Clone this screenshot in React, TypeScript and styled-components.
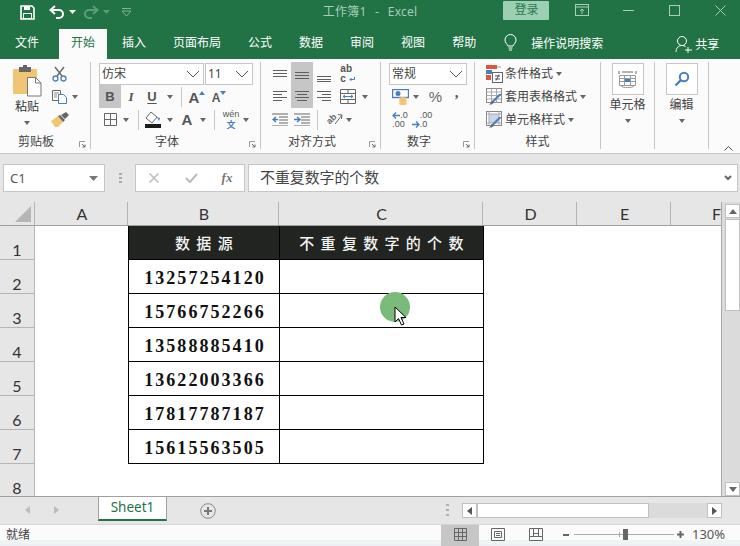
import React from "react";
import styled, { createGlobalStyle } from "styled-components";

const Global = createGlobalStyle`
  html, body { margin: 0; padding: 0; background: #fff; }
  * { box-sizing: border-box; }
  #root { width: 740px; height: 546px; overflow: hidden; }
`;
const CJK = `"Noto Sans", "Noto Sans CJK SC", sans-serif`;

const Page = styled.div`
  width: 740px; height: 546px; display: flex; flex-direction: column; overflow: hidden;
  font-family: ${CJK}; font-size: 12px; color: #444; background: #e6e6e6;
`;
/* ---------- title bar ---------- */
const TitleBar = styled.div`
  height: 29px; background: #217346; display: grid; grid-template-columns: 1fr auto 1fr; align-items: center; overflow: hidden;
`;
const Qat = styled.div`display: flex; align-items: center; height: 100%; padding-left: 20px; padding-bottom: 5px;`;
const QatCell = styled.span<{ $w: number }>`width: ${p => p.$w}px; display: inline-flex; align-items: center; justify-content: flex-start;`;
const Title = styled.div`color: #a9cdb9; font-size: 12px; line-height: 14px; padding-bottom: 6px; white-space: pre; word-spacing: 1px; letter-spacing: 0.2px;`;
const WinControls = styled.div`display: flex; justify-content: flex-end; align-items: center; height: 100%; margin-right: -4px;`;
const Login = styled.div`
  width: 46px; height: 19px; margin: 0 9px 9px 0; border-radius: 1px; background: #9ccfb3; color: #2b7a4f;
  display: flex; align-items: center; justify-content: center; font-size: 12px; line-height: 14px;
`;
const WinBtn = styled.div`width: 46.4px; height: 19px; margin-bottom: 9px; display: flex; align-items: center; justify-content: center;`;
/* ---------- tabs ---------- */
const TabBar = styled.div`height: 30px; background: #217346; display: flex; align-items: stretch; padding-left: 3px; color: #fff;`;
const Tab = styled.div<{ $on?: boolean; $mr?: number }>`
  padding: 0 12px; margin-right: ${p => p.$mr ?? 3}px; display: flex; align-items: center; font-size: 12px; line-height: 14px; padding-bottom: 2px;
  background: ${p => (p.$on ? "#fbfbfb" : "transparent")}; color: ${p => (p.$on ? "#217346" : "#fff")};
`;
const TellMe = styled.div`display: flex; align-items: center; padding: 0 0 2px 14px; gap: 14px; font-size: 12px;`;
const Share = styled.div`display: flex; align-items: center; margin-left: 72px; padding-bottom: 1px; gap: 2px; font-size: 12px;`;
/* ---------- ribbon ---------- */
const Ribbon = styled.div`height: 95px; background: #fbfbfb; border-bottom: 1px solid #c9c9c9; display: flex; padding-top: 3px; color: #444;`;
const Group = styled.div<{ $w: number }>`
  width: ${p => p.$w}px; height: 87px; border-right: 1px solid #c6c6c6; position: relative; flex: none; display: flex; flex-direction: column;
`;
const GroupBody = styled.div`height: 73px; display: flex;`;
const GroupLabel = styled.div<{ $pr?: number }>`height: 14px; line-height: 14px; text-align: center; font-size: 12px; color: #444; padding-right: ${p => p.$pr ?? 0}px;`;
const Launcher = styled.span`position: absolute; right: 4px; bottom: 1px; display: flex;`;
const Rows = styled.div<{ $pl?: number }>`display: flex; flex-direction: column; padding-left: ${p => p.$pl ?? 0}px;`;
const Row = styled.div<{ $h?: number }>`display: flex; align-items: center; height: ${p => p.$h ?? 23}px;`;
const Cell = styled.span<{ $w: number; $on?: boolean }>`
  width: ${p => p.$w}px; height: 100%; display: inline-flex; align-items: center; justify-content: center; flex: none;
  background: ${p => (p.$on ? "#c6c6c6" : "transparent")};
`;
const Caret = styled.span`width: 0; height: 0; flex: none; border-left: 3.5px solid transparent; border-right: 3.5px solid transparent; border-top: 4px solid #666;`;
const VSep = styled.span<{ $l: number; $r: number }>`width: 1px; height: 20px; background: #c6c6c6; flex: none; margin: 0 ${p => p.$r}px 0 ${p => p.$l}px;`;
const Combo = styled.div<{ $w: number; $ml?: number }>`
  width: ${p => p.$w}px; height: 22px; margin-left: ${p => p.$ml ?? 0}px; background: #fff; border: 1px solid #c6c6c6; display: flex; align-items: center; justify-content: space-between;
  padding: 0 3px 0 2px; font-size: 12px; color: #444; line-height: 14px;
`;
const PasteCol = styled.div`width: 47px; padding-left: 7px; display: flex; flex-direction: column; align-items: center;`;
const PasteLabel = styled.div`font-size: 12px; line-height: 14px; margin-top: 3px; color: #333;`;
const GlyphB = styled.span`font: 700 13px "Liberation Sans", sans-serif; color: #555;`;
const GlyphI = styled.span`font: italic 700 13px "Liberation Serif", serif; color: #555;`;
const GlyphU = styled.span`font: 700 13px "Liberation Sans", sans-serif; color: #555; text-decoration: underline; text-underline-offset: 2px;`;
const GlyphA = styled.span<{ $s?: number }>`font: 700 ${p => p.$s ?? 14}px "Liberation Sans", sans-serif; color: #555; line-height: 14px;`;
const StackA = styled.span`display: inline-flex; align-items: flex-start; gap: 0; margin-top: 2px;`;
const Wen = styled.span`display: flex; flex-direction: column; align-items: center; gap: 1px; font-size: 9px; line-height: 9px; color: #555; font-family: "Liberation Sans", sans-serif;`;
const WenZh = styled.span`color: #4a7ebb; font: 700 9px/9px "Noto Sans CJK SC", sans-serif;`;
const AbC = styled.span`display: flex; flex-direction: column; font: 700 10px/10px "Liberation Sans", sans-serif; color: #555;`;
const Pct = styled.span`font: 15px "Liberation Sans", sans-serif; color: #666;`;
const Comma = styled.span`font: 700 15px/12px "Liberation Serif", serif; color: #555; margin-top: -9px;`;
const Dec = styled.span`display: grid; grid-template-columns: 8px auto; font: 9px/9px "Liberation Sans", sans-serif; color: #555; align-items: center;`;
const StyleText = styled.span`margin: 0 3px 0 2px; font-size: 12px; line-height: 14px; color: #444;`;
const BigCol = styled.div`width: 100%; display: flex; flex-direction: column; align-items: center; padding-top: 1px;`;
const BigBtn = styled.div`width: 32px; height: 32px; border: 1px solid #c6c6c6; background: #fff; display: flex; align-items: center; justify-content: center;`;
const BigLabel = styled.div`font-size: 12px; line-height: 14px; margin: 3px 0 7px;`;
const Collapse = styled.span`margin: auto 7px 2px 15px; display: flex;`;
/* ---------- formula bar ---------- */
const FormulaBar = styled.div`height: 48px; background: #e6e6e6; display: flex; padding: 10px 2px 10px 3px; align-items: stretch;`;
const Box = styled.div<{ $w?: number; $grow?: boolean; $ml?: number }>`
  ${p => (p.$w ? `width:${p.$w}px;` : "")} ${p => (p.$grow ? "flex:1;" : "")}
  margin-left: ${p => p.$ml ?? 0}px;
  background: #fff; border: 1px solid #c6c6c6; display: flex; align-items: center; line-height: 16px;
`;
const NameText = styled.span`flex: 1; padding-left: 6px; font: 13px "Noto Sans", sans-serif; color: #555;`;
const Dots = styled.div`width: 30px; display: flex; align-items: center; justify-content: center;`;
const FnCell = styled.span<{ $w: number }>`width: ${p => p.$w}px; display: flex; align-items: center; justify-content: center;`;
const Fx = styled.span`font: italic 700 13px "Liberation Serif", serif; color: #777;`;
const FormulaText = styled.span`flex: 1; padding: 0 0 3px 11px; font-size: 14.9px; color: #444;`;
/* ---------- sheet ---------- */
const SheetArea = styled.div`height: 294px; display: flex; position: relative; overflow: hidden;`;
const SheetMain = styled.div`width: 722px; display: flex; flex-direction: column; border-right: 1px solid #a9a9a9;`;
const HeaderRow = styled.div`height: 24px; display: grid; grid-template-columns: 35px 93px 151px 204px 94px 94px 50px; background: #e6e6e6; border-bottom: 1px solid #a0a0a0; overflow: hidden;`;
const Corner = styled.div`display: flex; padding: 4px 0 0 15px; border-right: 1px solid #b5b5b5;`;
const ColHead = styled.div<{ $cut?: boolean }>`
  text-align: center; font: 16px/24px Lato, sans-serif; color: #333; padding-left: 2px;
  border-right: ${p => (p.$cut ? "0" : "1px solid #b5b5b5")};
  ${p => (p.$cut ? "padding-left: 41px; white-space: nowrap; text-align: left;" : "")}
`;
const SheetGrid = styled.div`
  flex: 1; display: grid; grid-template-columns: 35px 93px 151px 205px 1fr; grid-auto-rows: 34px; background: #fff; overflow: hidden;
`;
const RowHead = styled.div`
  background: #e6e6e6; border-right: 1px solid #b5b5b5; border-bottom: 1px solid #b5b5b5; text-align: center;
  font: 16px/20px Lato, sans-serif; color: #333; padding-top: 14px;
`;
const Blank = styled.div``;
const DCell = styled.div<{ $c?: boolean }>`
  border-left: 1px solid #000; border-bottom: 1px solid #000; ${p => (p.$c ? "border-right: 1px solid #000;" : "")}
  display: flex; align-items: center; justify-content: center; background: #fff; padding: 3px 0 0 2px;
  font: 700 18px "Liberation Serif", serif; letter-spacing: 2.05px; color: #111;
`;
const HCell = styled.div<{ $c?: boolean }>`
  background: #222421; border-left: 1px solid #000; border-bottom: 1px solid #000; ${p => (p.$c ? "border-right: 1px solid #000;" : "")}
  display: flex; align-items: center; justify-content: center; color: #f4f4f4;
  font: 500 15px/20px "Noto Sans CJK SC", sans-serif; letter-spacing: 6.3px; padding: 1px 0 0 6px;
`;
const Spot = styled.div`position: absolute; left: 380px; top: 90px; width: 30px; height: 30px; border-radius: 50%; background: #7aba7a;`;
const Pointer = styled.svg`position: absolute; left: 394px; top: 104px;`;
const VScroll = styled.div`width: 18px; background: #dcdbdc; padding-left: 3px; display: flex; flex-direction: column; padding-top: 2px;`;
const VBtn = styled.div`height: 14px; background: #fff; border: 1px solid #c0c0c0; display: flex; align-items: center; justify-content: center;`;
const VThumb = styled.div`height: 92px; margin-top: 1px; background: #fff; border: 1px solid #c0c0c0;`;
const VSpacer = styled.div`flex: 1;`;
/* ---------- sheet tabs ---------- */
const TabStrip = styled.div`height: 28px; background: #e6e6e6; border-top: 1px solid #a0a0a0; display: flex; align-items: flex-start; position: relative;`;
const NavArrows = styled.div`width: 98px; display: flex; gap: 24px; padding: 9px 0 0 25px;`;
const SheetTab = styled.div`
  width: 69px; height: 25px; background: #fff; margin-top: -1px; border-left: 1px solid #a0a0a0; border-right: 1px solid #a0a0a0; border-top: 1px solid #a0a0a0; border-bottom: 2px solid #217346;
  color: #217346; text-align: center; font: 13.5px/21px "Noto Sans", sans-serif;
`;
const AddSheet = styled.div`margin: 6px 0 0 33px; display: flex;`;
const TabDots = styled.div`margin: 7px 0 0 230px; display: flex; width: 16px;`;
const HScroll = styled.div`width: 260px; height: 15px; margin-top: 6px; background: #dcdbdc; display: flex;`;
const HBtn = styled.div`width: 15px; background: #fff; border: 1px solid #c0c0c0; display: flex; align-items: center; justify-content: center;`;
const HThumb = styled.div`width: 172px; background: #fff; border: 1px solid #c0c0c0; margin-left: 0;`;
const HSpacer = styled.div`flex: 1;`;
/* ---------- status ---------- */
const StatusBar = styled.div`
  height: 22px; border-top: 1px solid #d4d4d4; display: flex; align-items: stretch;
  background: linear-gradient(#fbfbfb 15px, #eef4f2 15px, #eef4f2 19px, #eeeff5 19px);
`;
const StatusText = styled.div`width: 441px; padding: 2px 0 0 6px; font-size: 12px; line-height: 16px; color: #444;`;
const ViewBtn = styled.div<{ $on?: boolean }>`width: 38px; display: flex; align-items: center; justify-content: center; padding-bottom: 3px; background: ${p => (p.$on ? "#c6c6c6" : "transparent")};`;
const Zoom = styled.div`display: flex; align-items: center; padding: 0 0 3px 8px;`;
const Pctl = styled.span`font: 13px "Noto Sans", sans-serif; color: #555; margin-left: 7px;`;
const OrientWrap = styled.span`position: relative; width: 17px; height: 15px; display: inline-block;`;
const OrientText = styled.span`position: absolute; left: 0; top: 2px; font: 700 9px/10px "Liberation Sans", sans-serif; color: #666; transform: rotate(-45deg);`;
const OrientArrow = styled.svg`position: absolute; left: 0; top: 0;`;

/* ---------- icons ---------- */
const G = "#5f5f5f", B = "#4a7ebb", O = "#f0c674";
type L = [number, number, number];
const LineIcon = ({ lines, w = 16, h = 16, color = G }: { lines: L[]; w?: number; h?: number; color?: string }) => (
  <svg width={w} height={h} viewBox={`0 0 ${w} ${h}`}>
    {lines.map(([a, b, y], i) => <rect key={i} x={a} y={y} width={b - a} height={1} fill={color} />)}
  </svg>
);
const Chevron = () => (
  <svg width="14" height="8" viewBox="0 0 14 8"><path d="M1 1l6 6 6-6" fill="none" stroke="#555" /></svg>
);
const LauncherIcon = () => (
  <svg width="7" height="7" viewBox="0 0 7 7"><path d="M.5 6V.5H6" fill="none" stroke="#999" /><path d="M3 3l3 3M6 3.5V6H3.500" fill="none" stroke="#666" /></svg>
);
const Save = () => (
  <svg width="15" height="15" viewBox="0 0 15 15"><path d="M1 1h11l2 2v11H1z" fill="none" stroke="#fff" strokeWidth="1.6" /><rect x="4" y="1" width="6" height="4" fill="#fff" /><rect x="3.500" y="8.500" width="8" height="5" fill="none" stroke="#fff" /></svg>
);
const Undo = ({ c = "#fff", flip }: { c?: string; flip?: boolean }) => (
  <svg width="16" height="14" viewBox="0 0 16 14" style={flip ? { transform: "scaleX(-1)" } : undefined}>
    <path d="M2.500 5h7.500a4 4 0 0 1 0 8H7" fill="none" stroke={c} strokeWidth="2" /><path d="M6 1L1.500 5 6 9" fill="none" stroke={c} strokeWidth="2" />
  </svg>
);
const SmallCaret = ({ c = "#fff" }: { c?: string }) => (
  <svg width="7" height="4" viewBox="0 0 7 4"><path d="M0 0h7L3.500 4z" fill={c} /></svg>
);
const Customize = () => (
  <svg width="9" height="8" viewBox="0 0 9 8"><rect width="9" height="1" fill="#7fb39a" /><path d="M0 3h9L4.500 8z" fill="none" stroke="#7fb39a" /></svg>
);
const RibbonDisplay = () => (
  <svg width="14" height="12" viewBox="0 0 14 12"><rect x=".5" y=".5" width="13" height="11" fill="none" stroke="#a9cdb9" /><path d="M.5 3h13M7 10V5M5 7l2-2 2 2" fill="none" stroke="#a9cdb9" /></svg>
);
const Minimize = () => <svg width="11" height="1"><rect width="11" height="1" fill="#a9cdb9" /></svg>;
const Maximize = () => <svg width="11" height="11"><rect x=".5" y=".5" width="10" height="10" fill="none" stroke="#a9cdb9" /></svg>;
const Close = () => <svg width="11" height="11"><path d="M.5.5l10 10M10.500.5l-10 10" stroke="#a9cdb9" fill="none" /></svg>;
const Bulb = () => (
  <svg width="13" height="18" viewBox="0 0 13 18"><path d="M4 12C3 9.500 1 9 1 6a5.500 5.500 0 0 1 11 0c0 3-2 3.500-3 6z" fill="none" stroke="#fff" /><path d="M4.500 14h4M5 16h3" stroke="#fff" /></svg>
);
const Person = () => (
  <svg width="18" height="18" viewBox="0 0 18 18"><circle cx="7" cy="6" r="4.500" fill="none" stroke="#fff" /><path d="M1 17c0-4 2.500-6.500 6-6.500 1.500 0 2.500.4 3.500 1M13 12v6M10 15h7" fill="none" stroke="#fff" /></svg>
);
const Paste = () => (
  <svg width="29" height="32" viewBox="0 0 29 32" style={{ marginTop: 3 }}>
    <rect x="0" y="4" width="24" height="25" rx="1" fill={O} /><rect x="6" y="2" width="12" height="5" fill="#666" /><rect x="10" y="0" width="4" height="3" fill="#666" />
    <path d="M14.500 12.500h8l5.500 5.500v13h-13.500z" fill="#fff" stroke="#777" /><path d="M22.500 12.500v5.500h5.500" fill="none" stroke="#777" />
  </svg>
);
const Cut = () => (
  <svg width="15" height="16" viewBox="0 0 15 16"><path d="M3 1l7 9M12 1L5 10" stroke="#666" strokeWidth="1.400" fill="none" /><circle cx="3.500" cy="12.500" r="2.500" fill="none" stroke={B} strokeWidth="1.300" /><circle cx="11.500" cy="12.500" r="2.500" fill="none" stroke={B} strokeWidth="1.300" /></svg>
);
const Copy = () => (
  <svg width="15" height="14" viewBox="0 0 15 14"><path d="M.5.500h8v10h-8z" fill="#fff" stroke="#666" /><path d="M6.500 4.500h5l3 3v6h-8z" fill="#fff" stroke={B} /><path d="M2 3h5M2 5h3M2 7h3" stroke="#888" /></svg>
);
const Painter = () => (
  <svg width="18" height="15" viewBox="0 0 18 15"><path d="M0 9l7-5 5 6-5 5H4z" fill={O} /><path d="M7 4l5 6 2-2-5-5z" fill="#666" /><path d="M10 3l5-3 3 3-4 4z" fill="#666" /></svg>
);
const Borders = () => (
  <svg width="13" height="13" viewBox="0 0 13 13"><path d="M.5.500h12v12H.5zM6.500.5v12M.5 6.500h12" fill="none" stroke="#666" /></svg>
);
const Fill = () => (
  <svg width="17" height="18" viewBox="0 0 17 18"><path d="M6 1l6 5-5 6-6-5z" fill="#fff" stroke="#666" /><path d="M12 6l3 1-1 3z" fill={B} /><rect x="0" y="13" width="16" height="4" fill="#1c1c1c" /></svg>
);
const Triangle = ({ c = B, down }: { c?: string; down?: boolean }) => (
  <svg width="6" height="4" viewBox="0 0 6 4"><path d={down ? "M0 0h6L3 4z" : "M0 4h6L3 0z"} fill={c} /></svg>
);
const Wrap = () => <svg width="6" height="5" viewBox="0 0 6 5"><path d="M5.500 0v2.500H1M2.500 1L1 2.500 2.500 4" fill="none" stroke={B} /></svg>;
const Merge = () => (
  <svg width="16" height="15" viewBox="0 0 16 15"><path d="M.5.500h15v14H.5zM.5 4.500h15M.5 10.500h15M8 .5v4M8 10.500v4" fill="none" stroke="#666" /><path d="M3 7.500h10M5 6L3 7.500 5 9M11 6l2 1.500L11 9" fill="none" stroke={B} /></svg>
);
const Indent = ({ right }: { right?: boolean }) => (
  <svg width="16" height="13" viewBox="0 0 16 13">
    {[0.5, 3.5, 6.5, 9.5, 12.5].map((y, i) => <rect key={y} x={i === 0 || i === 4 ? 0 : 7} y={y} width={i === 0 || i === 4 ? 16 : 9} height={1} fill="#666" />)}
    <path d={right ? "M0 6.500h5M3 4l3 2.500L3 9" : "M1 6.500h5M4 4L1 6.500 4 9"} fill="none" stroke={B} strokeWidth="1.400" />
  </svg>
);
const Orient = () => (
  <OrientWrap>
    <OrientText>ab</OrientText>
    <OrientArrow width="17" height="15" viewBox="0 0 17 15"><path d="M9 12L16 3M12 2.500l4 .5-.5 4" fill="none" stroke="#666" /></OrientArrow>
  </OrientWrap>
);
const Money = () => (
  <svg width="17" height="16" viewBox="0 0 17 16"><rect x=".5" y=".5" width="16" height="8" fill="#fff" stroke={B} strokeWidth="1.400" /><circle cx="6" cy="4.500" r="2.500" fill={B} /><ellipse cx="11" cy="9.500" rx="4" ry="1.500" fill={O} /><ellipse cx="11" cy="12" rx="4" ry="1.500" fill={O} /><ellipse cx="11" cy="14.500" rx="4" ry="1.500" fill={O} /></svg>
);
const ArrowL = () => <svg width="8" height="7" viewBox="0 0 8 7"><path d="M8 3.500H1M4 .5L1 3.500l3 3" fill="none" stroke={B} strokeWidth="1.300" /></svg>;
const ArrowR = () => <svg width="8" height="7" viewBox="0 0 8 7"><path d="M0 3.500h7M4 .5l3 3-3 3" fill="none" stroke={B} strokeWidth="1.300" /></svg>;
const CondFmt = () => (
  <svg width="17" height="18" viewBox="0 0 17 18"><rect x="0" y="0" width="11" height="4" fill="#d9583b" /><rect x="0" y="5" width="6" height="4" fill={B} /><rect x="0" y="10" width="5" height="5" fill="#d9583b" /><rect x="11" y="1" width="4" height="2" fill="#ccc" /><rect x="6.500" y="7.500" width="10" height="10" fill="#fff" stroke="#666" /><path d="M9 11h5M9 14h5M13 9.500l-3 6" stroke="#555" fill="none" /></svg>
);
const TableFmt = ({ plain }: { plain?: boolean }) => (
  <svg width="17" height="18" viewBox="0 0 17 18">
    <rect x=".5" y=".5" width="15" height="14" fill="#fff" stroke="#888" />
    {plain && <rect x="3" y="3" width="10" height="9" fill="#c9d3ea" />}
    <path d={plain ? "M.5 3h15M.5 12h15M3 .5v14M13 .5v14" : "M.5 4h15M.5 7.500h15M.5 11h15M5.500.5v14M10.500.5v14"} stroke="#aaa" fill="none" />
    <path d="M16 6l-8 8-3 3 0-3 8-8z" fill={B} /><path d="M3 17l3-4 2 2z" fill="#666" />
  </svg>
);
const CellsIcon = () => (
  <svg width="19" height="19" viewBox="0 0 19 19"><path d="M1 1v3M18 1v3M4 2h11" stroke="#666" fill="none" /><path d="M1.500 5.500h16v10h-16zM1.500 8.500h16M1.500 11.500h16M6.500 5.500v10M12.500 5.500v10" stroke="#999" fill="none" /><rect x="7" y="9" width="5" height="3" fill={B} /><path d="M3 16c0 2 13 2 13 0" stroke="#999" fill="none" /></svg>
);
const Search = () => (
  <svg width="16" height="16" viewBox="0 0 16 16"><circle cx="10" cy="6" r="4.200" fill="none" stroke={B} strokeWidth="2" /><path d="M7 9l-5.500 5.500" stroke={B} strokeWidth="2.400" /></svg>
);
const Up = () => <svg width="9" height="5" viewBox="0 0 9 5"><path d="M.5 4.500l4-4 4 4" fill="none" stroke="#555" /></svg>;
const NameCaret = () => <svg width="9" height="5" style={{ marginRight: 6 }}><path d="M0 0h9L4.500 5z" fill="#777" /></svg>;
const SepDots = () => <svg width="3" height="10"><rect width="3" height="2" fill="#aaa" /><rect y="4" width="3" height="2" fill="#aaa" /><rect y="8" width="3" height="2" fill="#aaa" /></svg>;
const XIcon = () => <svg width="10" height="10"><path d="M.5.5l9 9M9.500.5l-9 9" stroke="#bbb" strokeWidth="1.500" /></svg>;
const Check = () => <svg width="13" height="10" viewBox="0 0 13 10"><path d="M1 5l4 4 7-8" fill="none" stroke="#bbb" strokeWidth="2" /></svg>;
const FormulaChevron = () => <svg width="8" height="6" viewBox="0 0 8 6" style={{ marginRight: 5 }}><path d="M1 1l3 3 3-3" fill="none" stroke="#666" strokeWidth="2" /></svg>;
const CornerTri = () => <svg width="16" height="16"><path d="M16 0v16H0z" fill="#b5b5b5" /></svg>;
const Arrow = ({ dir, c = "#555" }: { dir: "u" | "d" | "l" | "r"; c?: string }) => {
  const p = { u: "M0 5h8L4 0z", d: "M0 0h8L4 5z", l: "M5 0v8L0 4z", r: "M0 0v8l5-4z" }[dir];
  const hz = dir === "u" || dir === "d";
  return <svg width={hz ? 8 : 5} height={hz ? 5 : 8}><path d={p} fill={c} /></svg>;
};
const Plus = () => (
  <svg width="16" height="16" viewBox="0 0 16 16"><circle cx="8" cy="8" r="7.300" fill="none" stroke="#888" /><path d="M8 4v8M4 8h8" stroke="#777" strokeWidth="2" /></svg>
);
const ThreeDots = () => <svg width="3" height="12"><rect width="3" height="2" fill="#b0b0b0" /><rect y="5" width="3" height="2" fill="#b0b0b0" /><rect y="10" width="3" height="2" fill="#b0b0b0" /></svg>;
const NormalView = () => <svg width="13" height="13"><path d="M.5.500h12v12H.5zM.5 4.500h12M.5 8.500h12M4.500.5v12M8.500.5v12" stroke="#666" fill="none" /></svg>;
const LayoutView = () => <svg width="14" height="13"><path d="M.5.500h13v12H.5zM3.500 3.500h7v6h-7zM5 5.500h4M5 7.500h4" stroke="#666" fill="none" /></svg>;
const BreakView = () => <svg width="14" height="13"><path d="M.5.500h13v12H.5zM.5 8.500h13M4.500.5v8M9.500.5v8M4.500 5.500h5" stroke="#666" fill="none" /></svg>;
const Slider = () => (
  <svg width="122" height="11" viewBox="0 0 122 11">
    <rect x="0" y="5" width="6" height="2" fill="#666" />
    <rect x="11" y="5" width="100" height="1" fill="#aaa" /><rect x="56" y="3" width="1" height="5" fill="#aaa" />
    <rect x="60" y="0" width="5" height="11" fill="#666" />
    <path d="M114 5.500h7M117.500 2v7" stroke="#666" strokeWidth="2" />
  </svg>
);

const rows = ["13257254120", "15766752266", "13588885410", "13622003366", "17817787187", "15615563505"];

export default function App() {
  return (
    <Page>
      <Global />
      <TitleBar>
        <Qat>
          <QatCell $w={29}><Save /></QatCell>
          <QatCell $w={20}><Undo /></QatCell>
          <QatCell $w={14}><SmallCaret /></QatCell>
          <QatCell $w={20}><Undo c="#5c9c7b" flip /></QatCell>
          <QatCell $w={19}><SmallCaret c="#5c9c7b" /></QatCell>
          <QatCell $w={14}><Customize /></QatCell>
        </Qat>
        <Title>工作簿1  -  Excel</Title>
        <WinControls>
          <Login>登录</Login>
          <WinBtn><RibbonDisplay /></WinBtn>
          <WinBtn><Minimize /></WinBtn>
          <WinBtn><Maximize /></WinBtn>
          <WinBtn><Close /></WinBtn>
        </WinControls>
      </TitleBar>
      <TabBar>
        <Tab $mr={8}>文件</Tab>
        <Tab $on $mr={3}>开始</Tab>
        <Tab>插入</Tab>
        <Tab>页面布局</Tab>
        <Tab>公式</Tab>
        <Tab>数据</Tab>
        <Tab>审阅</Tab>
        <Tab>视图</Tab>
        <Tab $mr={2}>帮助</Tab>
        <TellMe><Bulb />操作说明搜索</TellMe>
        <Share><Person />共享</Share>
      </TabBar>
      <Ribbon>
        <Group $w={91}>
          <GroupBody>
            <PasteCol>
              <Paste />
              <PasteLabel>粘贴</PasteLabel>
              <Caret style={{ marginTop: 7 }} />
            </PasteCol>
            <Rows>
              <Row><Cell $w={24}><Cut /></Cell></Row>
              <Row><Cell $w={24}><Copy /></Cell><Cell $w={8}><Caret /></Cell></Row>
              <Row><Cell $w={26}><Painter /></Cell></Row>
            </Rows>
          </GroupBody>
          <GroupLabel $pr={18}>剪贴板</GroupLabel>
          <Launcher><LauncherIcon /></Launcher>
        </Group>
        <Group $w={170}>
          <GroupBody>
            <Rows $pl={8}>
              <Row>
                <Combo $w={105}>仿宋<Chevron /></Combo>
                <Combo $w={48} $ml={1}>11<Chevron /></Combo>
              </Row>
              <Row>
                <Cell $w={22} $on><GlyphB>B</GlyphB></Cell>
                <Cell $w={20}><GlyphI>I</GlyphI></Cell>
                <Cell $w={22}><GlyphU>U</GlyphU></Cell>
                <Cell $w={14}><Caret /></Cell>
                <VSep $l={4} $r={4} />
                <Cell $w={22}><StackA><GlyphA $s={15}>A</GlyphA><Triangle /></StackA></Cell>
                <Cell $w={22}><StackA><GlyphA $s={12}>A</GlyphA><Triangle down /></StackA></Cell>
              </Row>
              <Row>
                <Cell $w={22}><Borders /></Cell>
                <Cell $w={10}><Caret /></Cell>
                <VSep $l={7} $r={5} />
                <Cell $w={18}><Fill /></Cell>
                <Cell $w={16}><Caret /></Cell>
                <Cell $w={18}><GlyphA $s={15}>A</GlyphA></Cell>
                <Cell $w={14}><Caret /></Cell>
                <VSep $l={4} $r={5} />
                <Cell $w={22}><Wen><span>wén</span><WenZh>文</WenZh></Wen></Cell>
                <Cell $w={8}><Caret /></Cell>
              </Row>
            </Rows>
          </GroupBody>
          <GroupLabel $pr={17}>字体</GroupLabel>
          <Launcher><LauncherIcon /></Launcher>
        </Group>
        <Group $w={120}>
          <GroupBody>
            <Rows $pl={8}>
              <Row>
                <Cell $w={22}><LineIcon lines={[[0, 14, 4], [0, 14, 7], [0, 14, 10]]} w={14} /></Cell>
                <Cell $w={22} $on><LineIcon lines={[[0, 14, 6], [0, 14, 9], [0, 14, 12]]} w={14} /></Cell>
                <Cell $w={22}><LineIcon lines={[[0, 14, 10], [0, 14, 13], [0, 14, 15]]} w={14} /></Cell>
                <Cell $w={25}><AbC>ab<span>c <Wrap /></span></AbC></Cell>
              </Row>
              <Row>
                <Cell $w={22}><LineIcon lines={[[0, 14, 2], [0, 9, 5], [0, 14, 8], [0, 9, 11]]} w={14} /></Cell>
                <Cell $w={22} $on><LineIcon lines={[[0, 14, 2], [2, 12, 5], [0, 14, 8], [2, 12, 11]]} w={14} /></Cell>
                <Cell $w={22}><LineIcon lines={[[0, 14, 2], [5, 14, 5], [0, 14, 8], [5, 14, 11]]} w={14} /></Cell>
                <Cell $w={25}><Merge /></Cell>
                <Cell $w={10}><Caret /></Cell>
              </Row>
              <Row>
                <Cell $w={22}><Indent /></Cell>
                <Cell $w={22}><Indent right /></Cell>
                <VSep $l={4} $r={8} />
                <Cell $w={17}><Orient /></Cell>
                <Cell $w={12}><Caret /></Cell>
              </Row>
            </Rows>
          </GroupBody>
          <GroupLabel $pr={17}>对齐方式</GroupLabel>
          <Launcher><LauncherIcon /></Launcher>
        </Group>
        <Group $w={94}>
          <GroupBody>
            <Rows $pl={8}>
              <Row><Combo $w={78}>常规<Chevron /></Combo></Row>
              <Row>
                <Cell $w={22}><Money /></Cell>
                <Cell $w={10}><Caret /></Cell>
                <Cell $w={29}><Pct>%</Pct></Cell>
                <Cell $w={13}><Comma>,</Comma></Cell>
              </Row>
              <Row>
                <Cell $w={22}><Dec><ArrowL /><span>.0</span><span>.00</span><span /></Dec></Cell>
                <Cell $w={22}><Dec><span /><span>.00</span><ArrowR /><span>.0</span></Dec></Cell>
              </Row>
            </Rows>
          </GroupBody>
          <GroupLabel $pr={17}>数字</GroupLabel>
          <Launcher><LauncherIcon /></Launcher>
        </Group>
        <Group $w={126}>
          <GroupBody>
            <Rows $pl={11}>
              <Row><CondFmt /><StyleText>条件格式</StyleText><Caret /></Row>
              <Row><TableFmt /><StyleText>套用表格格式</StyleText><Caret /></Row>
              <Row><TableFmt plain /><StyleText>单元格样式</StyleText><Caret /></Row>
            </Rows>
          </GroupBody>
          <GroupLabel>样式</GroupLabel>
        </Group>
        <Group $w={54}>
          <BigCol>
            <BigBtn><CellsIcon /></BigBtn>
            <BigLabel>单元格</BigLabel>
            <Caret />
          </BigCol>
        </Group>
        <Group $w={54}>
          <BigCol>
            <BigBtn><Search /></BigBtn>
            <BigLabel>编辑</BigLabel>
            <Caret />
          </BigCol>
        </Group>
        <Collapse><Up /></Collapse>
      </Ribbon>
      <FormulaBar>
        <Box $w={102}><NameText>C1</NameText><NameCaret /></Box>
        <Dots><SepDots /></Dots>
        <Box $w={110}>
          <FnCell $w={36}><XIcon /></FnCell>
          <FnCell $w={38}><Check /></FnCell>
          <FnCell $w={34}><Fx>fx</Fx></FnCell>
        </Box>
        <Box $grow $ml={3}><FormulaText>不重复数字的个数</FormulaText><FormulaChevron /></Box>
      </FormulaBar>
      <SheetArea>
        <SheetMain>
          <HeaderRow>
            <Corner><CornerTri /></Corner>
            <ColHead>A</ColHead>
            <ColHead>B</ColHead>
            <ColHead>C</ColHead>
            <ColHead>D</ColHead>
            <ColHead>E</ColHead>
            <ColHead $cut>F</ColHead>
          </HeaderRow>
          <SheetGrid>
            <RowHead>1</RowHead><Blank />
            <HCell>数据源</HCell><HCell $c>不重复数字的个数</HCell><Blank />
            {rows.map((n, i) => (
              <React.Fragment key={n}>
                <RowHead>{i + 2}</RowHead><Blank />
                <DCell>{n}</DCell><DCell $c /><Blank />
              </React.Fragment>
            ))}
            <RowHead>8</RowHead>
          </SheetGrid>
        </SheetMain>
        <VScroll>
          <VBtn><Arrow dir="u" c="#666" /></VBtn>
          <VThumb />
          <VSpacer />
          <VBtn><Arrow dir="d" c="#666" /></VBtn>
        </VScroll>
        <Spot />
        <Pointer width="14" height="21" viewBox="0 0 14 21">
          <path d="M1 1v15l3.500-3.500 3 6.500 2.500-1-3-6.500h5z" fill="#fff" stroke="#000" />
        </Pointer>
      </SheetArea>
      <TabStrip>
        <NavArrows><Arrow dir="l" c="#bbb" /><Arrow dir="r" c="#bbb" /></NavArrows>
        <SheetTab>Sheet1</SheetTab>
        <AddSheet><Plus /></AddSheet>
        <TabDots><ThreeDots /></TabDots>
        <HScroll>
          <HBtn><Arrow dir="l" /></HBtn>
          <HThumb />
          <HSpacer />
          <HBtn><Arrow dir="r" /></HBtn>
        </HScroll>
      </TabStrip>
      <StatusBar>
        <StatusText>就绪</StatusText>
        <ViewBtn $on><NormalView /></ViewBtn>
        <ViewBtn><LayoutView /></ViewBtn>
        <ViewBtn><BreakView /></ViewBtn>
        <Zoom><Slider /><Pctl>130%</Pctl></Zoom>
      </StatusBar>
    </Page>
  );
}
